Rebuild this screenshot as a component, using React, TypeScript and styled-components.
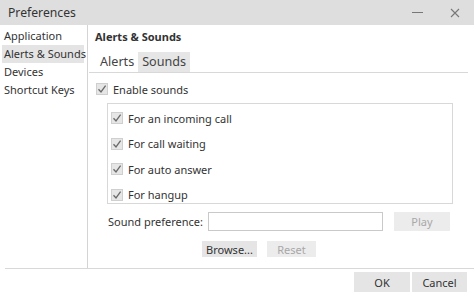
import styled, { createGlobalStyle } from "styled-components";

const GlobalStyle = createGlobalStyle`
  html, body {
    margin: 0;
    padding: 0;
    background: #fff;
  }
  body {
    font-family: "Noto Sans", "Open Sans", sans-serif;
    color: #333;
  }
`;

const sidebarItems = ["Application", "Alerts & Sounds", "Devices", "Shortcut Keys"];
const soundEvents = [
  "For an incoming call",
  "For call waiting",
  "For auto answer",
  "For hangup",
];

function Check() {
  return (
    <CheckBox>
      <svg width="10" height="10" viewBox="0 0 10 10">
        <path d="M1.5 5.2 L4 8 L8.6 1.6" fill="none" stroke="#6a6a6a" strokeWidth="1.3" />
      </svg>
    </CheckBox>
  );
}

function App() {
  return (
    <Window>
      <GlobalStyle />
      <TitleBar>
        <TitleText>Preferences</TitleText>
        <TitleControls>
          <Minimize />
          <svg width="10" height="10" viewBox="0 0 10 10">
            <path d="M1 1 L9 9 M9 1 L1 9" stroke="#777" strokeWidth="1.1" />
          </svg>
        </TitleControls>
      </TitleBar>

      <Body>
        <Sidebar>
          {sidebarItems.map((item) => (
            <SidebarItem key={item} active={item === "Alerts & Sounds"}>
              {item}
            </SidebarItem>
          ))}
        </Sidebar>

        <Content>
          <Heading>Alerts &amp; Sounds</Heading>
          <TabBar>
            <Tab active={false}>Alerts</Tab>
            <Tab active>Sounds</Tab>
          </TabBar>

          <EnableRow>
            <Check />
            <span>Enable sounds</span>
          </EnableRow>

          <GroupBox>
            {soundEvents.map((ev) => (
              <EventRow key={ev}>
                <Check />
                <span>{ev}</span>
              </EventRow>
            ))}
          </GroupBox>

          <PrefRow>
            <PrefLabel>Sound preference:</PrefLabel>
            <TextInput />
            <Button disabled wide={56} tall={19}>
              Play
            </Button>
          </PrefRow>

          <BrowseRow>
            <Button wide={55}>Browse...</Button>
            <Button disabled wide={49}>
              Reset
            </Button>
          </BrowseRow>
        </Content>
      </Body>

      <Footer>
        <Button wide={56} tall={20}>
          OK
        </Button>
        <Button wide={55} tall={20}>
          Cancel
        </Button>
      </Footer>
    </Window>
  );
}

export default App;

/* ---------------- styled-components ---------------- */

const Window = styled.div`
  width: 474px;
  height: 297px;
  display: flex;
  flex-direction: column;
  background: #fff;
  overflow: hidden;
`;

const TitleBar = styled.div`
  height: 25px;
  flex: none;
  background: #dedede;
  display: flex;
  align-items: center;
  justify-content: space-between;
  padding: 0 14px 0 8px;
`;

const TitleText = styled.span`
  font-size: 12.2px;
  color: #333;
`;

const TitleControls = styled.div`
  display: flex;
  align-items: center;
  gap: 27px;
`;

const Minimize = styled.div`
  width: 11px;
  height: 1px;
  background: #777;
`;

const Body = styled.div`
  height: 243px;
  display: flex;
`;

const Sidebar = styled.div`
  width: 88px;
  flex: none;
  border-right: 1px solid #d4d4d4;
  padding-top: 2px;
  box-sizing: border-box;
`;

const SidebarItem = styled.div<{ active: boolean }>`
  height: 18px;
  line-height: 18px;
  margin: 0 3px 0 2px;
  padding-left: 2px;
  font-size: 11px;
  white-space: nowrap;
  background: ${(p) => (p.active ? "#e4e4e4" : "transparent")};
`;

const Content = styled.div`
  flex: 1;
  padding: 0 6px 0 1px;
  display: flex;
  flex-direction: column;
`;

const Heading = styled.div`
  font-size: 11px;
  font-weight: bold;
  height: 18px;
  line-height: 18px;
  margin: 3px 0 0 6px;
`;

const TabBar = styled.div`
  margin-top: 6px;
  height: 20px;
  display: flex;
  padding-left: 5px;
  border-bottom: 1px solid #d8d8d8;
`;

const Tab = styled.div<{ active: boolean }>`
  height: 20px;
  line-height: 20px;
  padding: 0 4px 0 ${(p) => (p.active ? 4 : 6)}px;
  font-size: 12.6px;
  color: #444;
  background: ${(p) => (p.active ? "#e6e6e6" : "transparent")};
`;

const CheckBox = styled.span`
  width: 12px;
  height: 12px;
  box-sizing: border-box;
  border: 1px solid #cfcfcf;
  background: #e6e6e6;
  display: inline-flex;
  align-items: center;
  justify-content: center;
  flex: none;
`;

const EnableRow = styled.label`
  display: flex;
  align-items: center;
  gap: 5px;
  font-size: 11px;
  height: 16px;
  margin: 8px 0 0 7px;
  white-space: nowrap;
`;

const GroupBox = styled.div`
  margin: 6px 15px 0 18px;
  height: 101px;
  box-sizing: border-box;
  border: 1px solid #d8d8d8;
  padding: 6px 0 0 3px;
  display: flex;
  flex-direction: column;
  gap: 9.6px;
`;

const EventRow = styled.label`
  display: flex;
  align-items: center;
  gap: 5px;
  font-size: 11px;
  height: 16px;
  white-space: nowrap;
`;

const PrefRow = styled.div`
  display: flex;
  align-items: center;
  margin: 8px 0 0 19px;
  height: 19px;
`;

const PrefLabel = styled.span`
  font-size: 11px;
  width: 100px;
  flex: none;
  white-space: nowrap;
`;

const TextInput = styled.div`
  width: 175px;
  height: 19px;
  flex: none;
  box-sizing: border-box;
  border: 1px solid #c9c9c9;
  margin-right: 11px;
`;

const Button = styled.button<{ wide: number; tall?: number }>`
  width: ${(p) => p.wide}px;
  height: ${(p) => p.tall ?? 16}px;
  flex: none;
  border: none;
  background: #e5e5e5;
  padding: 0;
  font-family: inherit;
  font-size: 11px;
  color: #333;

  &:disabled {
    background: #ececec;
    color: #a8a8a8;
  }
`;

const BrowseRow = styled.div`
  display: flex;
  gap: 10px;
  margin: 10px 0 0 113px;
`;

const Footer = styled.div`
  height: 29px;
  margin-left: 5px;
  border-top: 1px solid #d8d8d8;
  box-sizing: border-box;
  display: flex;
  justify-content: flex-end;
  align-items: flex-start;
  gap: 2px;
  padding: 3px 7px 0 0;
`;
